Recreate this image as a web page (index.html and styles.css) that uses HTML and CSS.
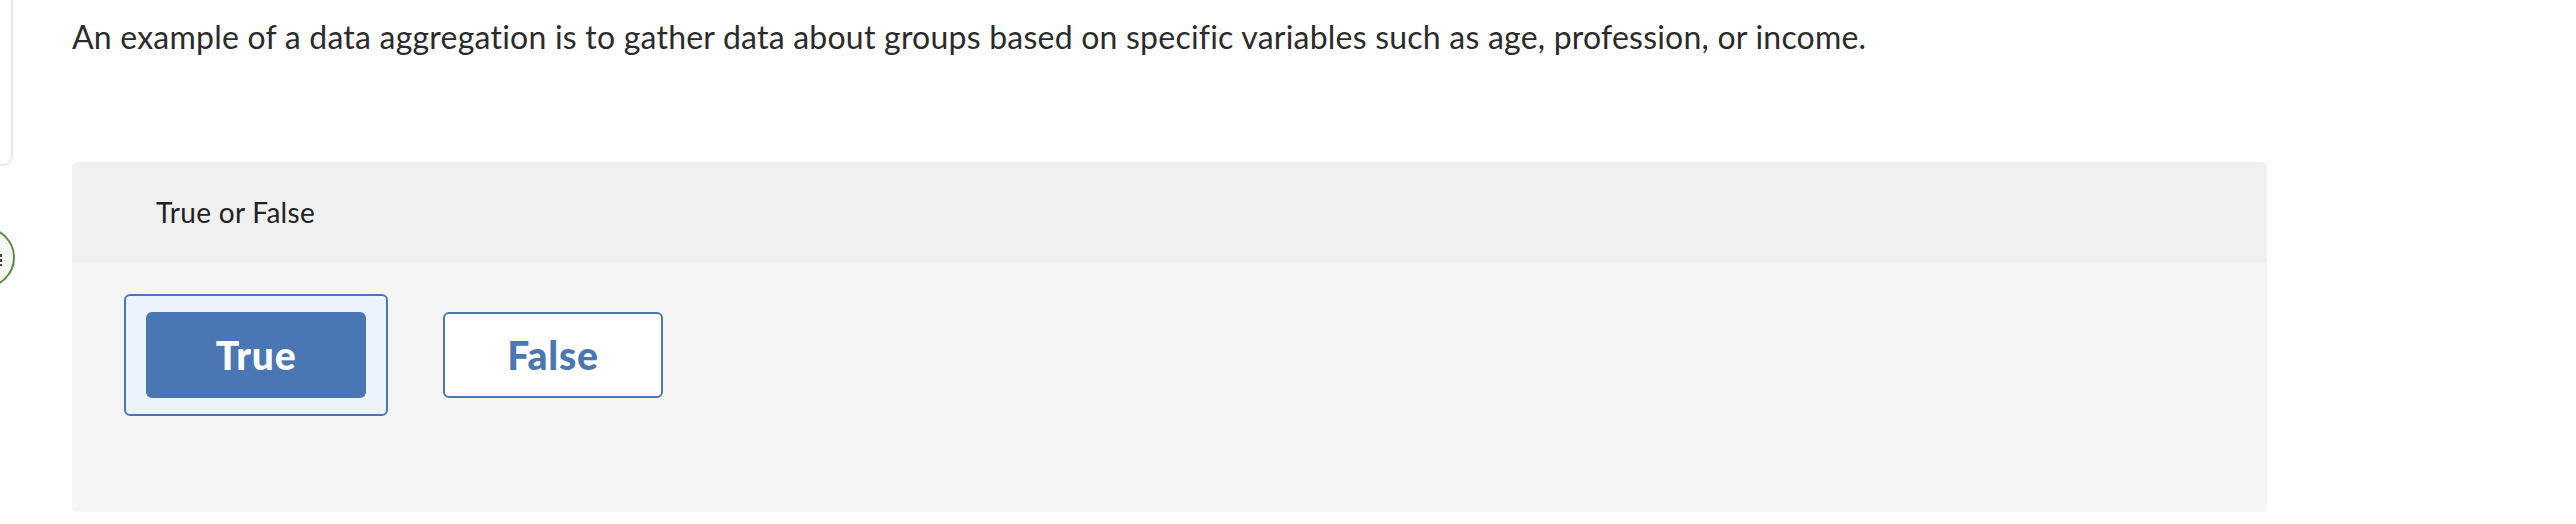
FILE: index.html
```html
<!DOCTYPE html>
<html lang="en">
<head>
    <meta charset="UTF-8">
    <meta name="viewport" content="width=device-width, initial-scale=1.0">
    <title>True or False</title>
    <link rel="stylesheet" href="styles.css">
</head>
<body>
    <div class="page">
        <div class="sidebar">
            <div class="side-card"></div>
            <div class="side-pill"><span class="pill-mark"></span></div>
        </div>

        <div class="main">
            <p class="prompt">An example of a data aggregation is to gather data about groups based on specific variables such as age, profession, or income.</p>

            <div class="question">
                <div class="question-header">True or False</div>
                <div class="question-body">
                    <div class="option selected">
                        <button class="choice">True</button>
                    </div>
                    <div class="option">
                        <button class="choice">False</button>
                    </div>
                </div>
            </div>
        </div>
    </div>
</body>
</html>
```

FILE: styles.css
```css
body {
    margin: 0;
    background: #fff;
    color: #2b2b2b;
    font-family: 'Lato', 'Open Sans', sans-serif;
}

.page {
    display: flex;
    align-items: flex-start;
    gap: 57px;
}

.sidebar {
    width: 15px;
    overflow: hidden;
    flex-shrink: 0;
}

.side-card {
    width: 120px;
    height: 196px;
    margin-top: -30px;
    margin-left: -107px;
    border: 2px solid #e9e9e9;
    border-radius: 10px;
    box-sizing: border-box;
}

.side-pill {
    width: 64px;
    height: 61px;
    margin-top: 61px;
    margin-left: -49px;
    border: 2px solid #5b8c3e;
    border-radius: 31px;
    background: #f4f8f1;
    box-sizing: border-box;
    display: flex;
    align-items: center;
    justify-content: flex-end;
    padding-right: 11px;
}

.pill-mark {
    width: 3px;
    height: 12px;
    margin-top: 4px;
    background: repeating-linear-gradient(#444 0 3px, transparent 3px 5px);
}

.main {
    width: 2195px;
}

.prompt {
    margin: 0;
    padding-top: 17px;
    font-size: 32px;
    letter-spacing: 0.22px;
    line-height: 40px;
    height: 145px;
}

.question {
    background: #f5f5f5;
    border-radius: 6px;
    overflow: hidden;
    height: 350px;
}

.question-header {
    background: #f0f0f0;
    height: 100px;
    padding-left: 84px;
    display: flex;
    align-items: center;
    font-size: 28px;
    letter-spacing: 0.3px;
    color: #222;
}

.question-body {
    display: flex;
    align-items: flex-start;
    gap: 33px;
    padding: 32px 52px;
}

.option {
    border: 2px solid transparent;
    border-radius: 6px;
    padding: 16px 20px;
}

.option.selected {
    border-color: #4a76b4;
    background: #edf3fa;
}

.choice {
    display: block;
    width: 220px;
    height: 86px;
    border: 2px solid #4a76b4;
    border-radius: 6px;
    background: #fff;
    color: #4a76b4;
    font-family: inherit;
    font-size: 39px;
    font-weight: 900;
    letter-spacing: 0.8px;
    padding: 0;
}

.selected .choice {
    background: #4a76b4;
    color: #fff;
}
```
